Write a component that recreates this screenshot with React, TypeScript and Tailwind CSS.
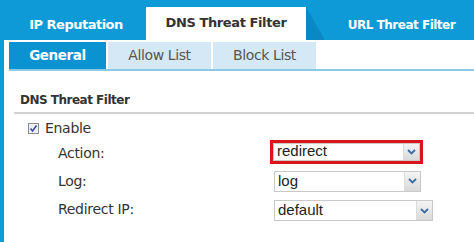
import React from "react";

const gothic = { fontFamily: '"DejaVu Sans", "Noto Sans", sans-serif' };
const arial = { fontFamily: '"Liberation Sans", Arial, sans-serif' };

function Chevron() {
  return (
    <svg width="9" height="6" viewBox="0 0 9 6">
      <path d="M1 1 L4.5 4.5 L8 1" fill="none" stroke="#3a6ea5" strokeWidth="1.8" />
    </svg>
  );
}

function Select({ value, width, height }: { value: string; width: string; height: string }) {
  return (
    <div className={`flex ${height} ${width} border border-[#c9c9c9] bg-white`}>
      <div className="flex flex-1 items-center pl-[3px] text-[15px] text-[#222]" style={arial}>
        {value}
      </div>
      <div className="flex w-[16px] items-center justify-center bg-gradient-to-b from-[#f4f4f4] to-[#d9d9d9] border-l border-[#dcdcdc]">
        <Chevron />
      </div>
    </div>
  );
}

export default function App() {
  return (
    <div className="relative h-[242px] w-[474px] overflow-hidden bg-white" style={gothic}>
      {/* top tabs */}
      <div className="flex h-[40px] items-end bg-[#0e9ad7]">
        <div className="flex h-[40px] w-[146px] items-center justify-center pt-[10px] pl-[6px] text-[13px] font-bold text-white tracking-[-0.5px]">
          IP Reputation
        </div>
        <div className="flex h-[33px] w-[160px] items-center justify-center bg-white pb-[2px] text-[13px] font-bold text-[#333] tracking-[-0.4px]">
          DNS Threat Filter
        </div>
        <svg width="19" height="33" viewBox="0 0 19 33" className="block">
          <polygon points="0,0 0,33 19,33" fill="#0a88c4" />
        </svg>
        <div className="flex h-[40px] flex-1 items-center justify-center pt-[10px] pl-[4px] text-[12px] font-bold text-white tracking-[-0.5px]">
          URL Threat Filter
        </div>
      </div>

      {/* content */}
      <div className="h-[202px] border-l-4 border-[#0e9ad7]">
        <div className="ml-[5px] flex gap-[2px] border-b-2 border-[#8ec9e4] pt-[2px]">
          <div className="flex h-[27px] w-[97px] items-center justify-center bg-[#0a92d1] text-[13.5px] font-bold text-white tracking-[-0.4px]">
            General
          </div>
          <div className="flex h-[27px] w-[103px] items-center justify-center bg-[#d5e8f6] text-[14px] text-[#555] tracking-[-0.4px]">
            Allow List
          </div>
          <div className="flex h-[27px] w-[103px] items-center justify-center bg-[#d5e8f6] text-[14px] text-[#555] tracking-[-0.4px]">
            Block List
          </div>
        </div>

        <div className="ml-[10px] mt-[20px] border-b-2 border-[#d2d2d2] pb-[3px] pl-[6px] text-[12px] font-bold text-[#333] tracking-[-0.5px]">
          DNS Threat Filter
        </div>

        <div className="mt-[4px] flex items-center pl-[24px]">
          <div className="flex h-[11px] w-[11px] items-center justify-center border border-[#8a8a8a] bg-[#eef0f7]">
            <svg width="9" height="9" viewBox="0 0 9 9">
              <path d="M1.5 4.5 L3.6 7 L7.5 1.5" fill="none" stroke="#3b4a9c" strokeWidth="1.5" />
            </svg>
          </div>
          <span className="ml-[6px] text-[14px] text-[#333] tracking-[-0.3px]">Enable</span>
        </div>

        <div className="mt-[1px] flex flex-col">
          <div className="flex h-[26px] items-center">
            <span className="w-[212px] pl-[54px] text-[14px] text-[#333] tracking-[-0.3px]">Action:</span>
            <div className="mb-[3px] ml-[54px] border-[3px] border-[#d9141b]">
              <Select value="redirect" width="w-[147px]" height="h-[18px]" />
            </div>
          </div>
          <div className="flex h-[29px] items-center pt-[1px]">
            <span className="w-[212px] pl-[54px] text-[14px] text-[#333] tracking-[-0.3px]">Log:</span>
            <div className="ml-[58px]">
              <Select value="log" width="w-[147px]" height="h-[21px]" />
            </div>
          </div>
          <div className="flex h-[28px] items-center">
            <span className="w-[212px] pl-[54px] text-[14px] text-[#333] tracking-[-0.3px]">Redirect IP:</span>
            <div className="ml-[58px] mt-[3px]">
              <Select value="default" width="w-[159px]" height="h-[21px]" />
            </div>
          </div>
        </div>
      </div>
    </div>
  );
}
